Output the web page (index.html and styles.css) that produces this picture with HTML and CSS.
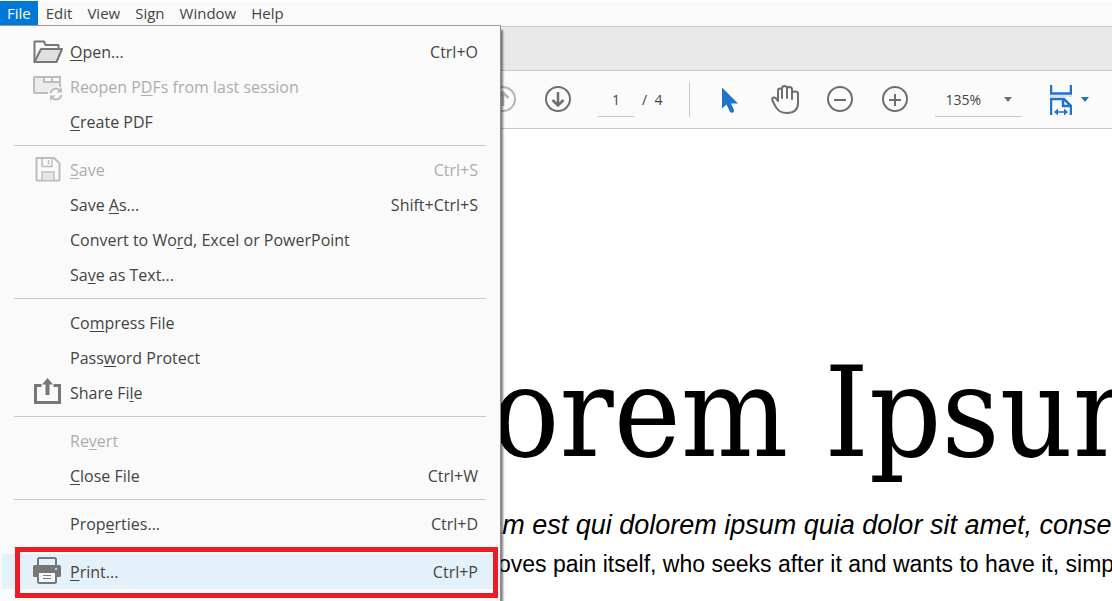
FILE: index.html
```html
<!DOCTYPE html>
<html lang="en">
<head>
    <meta charset="UTF-8">
    <meta name="viewport" content="width=device-width, initial-scale=1.0">
    <title>Lorem Ipsum</title>
    <link rel="stylesheet" href="styles.css">
</head>
<body>
    <nav class="menubar">
        <button class="menubar-item active">File</button>
        <button class="menubar-item">Edit</button>
        <button class="menubar-item">View</button>
        <button class="menubar-item">Sign</button>
        <button class="menubar-item">Window</button>
        <button class="menubar-item">Help</button>
    </nav>

    <!-- File menu -->
    <ul class="menu">
        <li><button class="menu-item">
            <svg class="menu-icon" viewBox="0 0 30 29" fill="none" stroke="#777" stroke-width="2" stroke-linejoin="round">
                <path d="M1.500 25V4.500H11L12.500 8H25.500V12"/>
                <path d="M1.500 25L8 12H29L23.500 25Z" fill="#e0e0e0"/>
            </svg>
            <span><u>O</u>pen...</span><kbd>Ctrl+O</kbd>
        </button></li>
        <li><button class="menu-item" disabled>
            <svg class="menu-icon" viewBox="0 0 30 29" fill="none" stroke="#bdbdbd" stroke-width="2">
                <rect x="1" y="5" width="26" height="16" rx="1" fill="#ececec"/>
                <path d="M11 5V10H27V5ZM19 5V10" fill="#fafafa"/>
                <circle cx="23" cy="22" r="8" fill="#fafafa" stroke="none"/>
                <path d="M17.500 21A5.500 5.500 0 0 1 27 18.500M28.500 23A5.500 5.500 0 0 1 19 25.500"/>
                <path d="M29 15V20.500H23.500ZM17 29V23.500H22.500Z" fill="#bdbdbd" stroke="none"/>
            </svg>
            <span>Reopen P<u>D</u>Fs from last session</span>
        </button></li>
        <li><button class="menu-item"><span class="menu-icon"></span><span><u>C</u>reate PDF</span></button></li>
        <li class="separator"></li>
        <li><button class="menu-item" disabled>
            <svg class="menu-icon" viewBox="0 0 30 29" fill="none" stroke="#bdbdbd" stroke-width="2" stroke-linejoin="round">
                <path d="M3.500 3H21L26.500 8.500V25.500H3.500Z"/>
                <path d="M9 3V11.500H19V3M9 25V17H21V25" stroke-width="1.500"/>
                <path d="M10 18H20V25H10Z" fill="#e6e6e6" stroke="none"/>
                <path d="M15.500 5V9.500" stroke-width="1.500"/>
            </svg>
            <span><u>S</u>ave</span><kbd>Ctrl+S</kbd>
        </button></li>
        <li><button class="menu-item"><span class="menu-icon"></span><span>Save <u>A</u>s...</span><kbd>Shift+Ctrl+S</kbd></button></li>
        <li><button class="menu-item"><span class="menu-icon"></span><span>Convert to Wo<u>r</u>d, Excel or PowerPoint</span></button></li>
        <li><button class="menu-item"><span class="menu-icon"></span><span>Sa<u>v</u>e as Text...</span></button></li>
        <li class="separator"></li>
        <li><button class="menu-item"><span class="menu-icon"></span><span>Co<u>m</u>press File</span></button></li>
        <li><button class="menu-item"><span class="menu-icon"></span><span>Pass<u>w</u>ord Protect</span></button></li>
        <li><button class="menu-item">
            <svg class="menu-icon" viewBox="0 0 30 29" fill="none" stroke="#777" stroke-width="3">
                <path d="M8.500 7.500H2.500V24.500H26.500V7.500H20.500"/>
                <path d="M14.500 17V4" stroke-width="4"/>
                <path d="M14.500 0L20 6.500H9Z" fill="#777" stroke="none"/>
            </svg>
            <span>Share Fi<u>l</u>e</span>
        </button></li>
        <li class="separator"></li>
        <li><button class="menu-item" disabled><span class="menu-icon"></span><span>Re<u>v</u>ert</span></button></li>
        <li><button class="menu-item"><span class="menu-icon"></span><span><u>C</u>lose File</span><kbd>Ctrl+W</kbd></button></li>
        <li class="separator"></li>
        <li><button class="menu-item"><span class="menu-icon"></span><span>Prop<u>e</u>rties...</span><kbd>Ctrl+D</kbd></button></li>
        <li class="separator"></li>
        <li class="highlighted"><button class="menu-item">
            <svg class="menu-icon" viewBox="0 0 30 29" fill="none" stroke="#777" stroke-width="2">
                <path d="M5 9V2.500Q5 1 6.500 1H21.500Q23 1 23 2.500V9"/>
                <path d="M2 8H26Q28 8 28 10V18.500Q28 20 26.500 20H1.500Q0 20 0 18.500V10Q0 8 2 8Z" fill="#777" stroke="none"/>
                <path d="M5 15H23V24.500Q23 26 21.500 26H6.500Q5 26 5 24.500Z" fill="#f2f7fb"/>
                <path d="M10 18.500H18M10 21.500H18" stroke-width="1"/>
                <circle cx="23" cy="12" r="1" fill="#e5f1fa" stroke="none"/>
            </svg>
            <span><u>P</u>rint...</span><kbd>Ctrl+P</kbd>
        </button></li>
        <li class="separator"></li>
    </ul>

    <div class="tabs"></div>

    <div class="toolbar">
        <div class="tools">
            <button class="tool" aria-label="Previous page" disabled>
                <svg width="28" height="28" viewBox="0 0 28 28" fill="none" stroke="#b5b5b5" stroke-width="2">
                    <circle cx="14" cy="13" r="12"/>
                    <path d="M14 20V7M8.500 12L14 6.500L19.500 12" stroke-width="2.500"/>
                </svg>
            </button>
            <button class="tool" aria-label="Next page">
                <svg width="28" height="28" viewBox="0 0 28 28" fill="none" stroke="#6e6e6e" stroke-width="2">
                    <circle cx="14" cy="13" r="12"/>
                    <path d="M14 6V19M8.500 14L14 19.500L19.500 14" stroke-width="2.500"/>
                </svg>
            </button>
        </div>
        <div class="pages">
            <input class="page-number" type="text" value="1" aria-label="Page number">
            <span>/&nbsp; 4</span>
        </div>
        <div class="tools group">
            <button class="tool" aria-label="Select">
                <svg width="28" height="28" viewBox="0 0 28 28" fill="#1f73c8">
                    <path d="M6 1.500V22.500L10.500 18.500L14 26Q15 27 17 26.500Q18.500 25.500 18 24L15 17.500H22Z"/>
                </svg>
            </button>
            <button class="tool" aria-label="Hand">
                <svg width="28" height="29" viewBox="0 0 28 29" fill="none" stroke="#6e6e6e" stroke-width="2" stroke-linejoin="round" stroke-linecap="round">
                    <path d="M7 16V5.500Q7 3.500 9 3.500Q11 3.500 11 5.500V13V3.500Q11 1 13.500 1Q16 1 16 3.500V13V4Q16 2 18.500 2Q21 2 21 4.500V14V8.500Q21 6.500 24 6.500Q27 6.500 27 8.500V18Q27 28 15.500 28Q9 28 5.500 23Q3 19 1.500 15.500Q0.500 13 2.500 12.500Q5 12 7 16"/>
                </svg>
            </button>
            <button class="tool" aria-label="Zoom out">
                <svg width="28" height="28" viewBox="0 0 28 28" fill="none" stroke="#6e6e6e" stroke-width="2">
                    <circle cx="14" cy="13" r="12"/>
                    <path d="M8 14H20"/>
                </svg>
            </button>
            <button class="tool" aria-label="Zoom in">
                <svg width="28" height="28" viewBox="0 0 28 28" fill="none" stroke="#6e6e6e" stroke-width="2">
                    <circle cx="14" cy="13" r="12"/>
                    <path d="M8 14H20M14 8V20"/>
                </svg>
            </button>
        </div>
        <div class="zoom">
            <select class="zoom-level" aria-label="Zoom level">
                <option>135%</option>
            </select>
            <svg class="zoom-caret" width="8" height="5" viewBox="0 0 8 5"><path d="M0 0H8L4 5Z" fill="#6e6e6e"/></svg>
        </div>
        <button class="tool fit" aria-label="Page display">
            <svg width="22" height="32" viewBox="0 0 22 32" fill="none" stroke="#1f73c8" stroke-width="2">
                <path d="M1 1V9.500H21V1" stroke-width="2.500"/>
                <path d="M0 12H22" stroke="#d6e4f5"/>
                <path d="M1 31V15H14L21 22V31M13 15V22H21" stroke-width="2.500"/>
                <path d="M5 28H17" stroke-width="1.500"/>
                <path d="M8 24.500V31.500L4 28ZM14 24.500V31.500L18 28Z" fill="#1f73c8" stroke="none"/>
            </svg>
            <svg width="8" height="5" viewBox="0 0 8 5"><path d="M0 0H8L4 5Z" fill="#1f73c8"/></svg>
        </button>
    </div>

    <main class="document">
        <h1>Lorem Ipsum</h1>
        <p class="quote">Neque porro quisquam est qui dolorem ipsum quia dolor sit amet, consectetur</p>
        <p class="translation">There is no one who loves pain itself, who seeks after it and wants to have it, simply</p>
    </main>
</body>
</html>
```
FILE: styles.css
```css
* {
    margin: 0;
    padding: 0;
    box-sizing: border-box;
}

body {
    font-family: "Open Sans", "Noto Sans", sans-serif;
    background-color: #fff;
    color: #444;
    height: 100vh;
    position: relative;
    overflow: hidden;
}

button,
input,
select {
    font: inherit;
    color: inherit;
    background: none;
    border: none;
}

/* Menu bar */
.menubar {
    display: flex;
    gap: 1px;
    height: 26px;
    padding-bottom: 1px;
    background-color: #fafafa;
    border-top: 1px solid #fff;
    font-size: 15px;
}

.menubar-item {
    padding: 0 7px;
    line-height: 24px;
}

.menubar-item.active {
    background-color: #0078d7;
    color: #fff;
}

/* Drop-down menu, lies over the document */
.menu {
    position: absolute;
    z-index: 1;
    top: 25px;
    left: 0;
    width: 501px;
    padding-top: 8px;
    list-style: none;
    background-color: #fafafa;
    border-top: 1px solid #999;
    border-right: 1px solid #8c8c8c;
    box-shadow: 2px 5px 2px rgba(0, 0, 0, 0.5);
    font-size: 16px;
}

.menu-item {
    display: flex;
    align-items: center;
    gap: 7px;
    width: 100%;
    height: 35px;
    padding: 0 22px 0 33px;
    text-align: left;
}

.menu-item:disabled {
    color: #adadad;
}

.menu-icon {
    width: 30px;
    height: 29px;
}

.menu-item u {
    text-underline-offset: 2px;
    text-decoration-thickness: 1px;
}

.menu-item kbd {
    margin-left: auto;
    font-family: inherit;
}

.separator {
    height: 13px;
    padding: 6px 14px;
}

.separator::before {
    content: "";
    display: block;
    height: 1px;
    background-color: #c8c8c8;
}

.highlighted {
    position: relative;
    margin-left: 2px;
    background-color: #e5f1fa;
}

.highlighted .menu-item {
    padding-left: 31px;
}

/* Red frame round the highlighted item */
.highlighted::after {
    content: "";
    position: absolute;
    inset: -7px 2px -9px 13px;
    border: 5px solid #ed1c24;
    pointer-events: none;
}

/* Tabs and toolbar */
.tabs {
    height: 45px;
    background-color: #e9e9e9;
    border-top: 1px solid #c8c8c8;
    border-bottom: 1px solid #c8c8c8;
}

.toolbar {
    display: flex;
    align-items: center;
    height: 58px;
    padding-left: 489px;
    background-color: #fbfbfb;
    border-bottom: 1px solid #c8c8c8;
    font-size: 14px;
}

.tools {
    display: flex;
    align-items: center;
    gap: 27px;
}

.tool {
    display: flex;
    align-items: center;
    flex-shrink: 0;
}

.pages {
    display: flex;
    align-items: center;
    gap: 8px;
    margin-left: 26px;
}

.page-number {
    width: 36px;
    height: 35px;
    border-bottom: 1px solid #c8c8c8;
    text-align: center;
}

.group {
    height: 35px;
    margin-left: 27px;
    padding-left: 26px;
    border-left: 1px solid #c8c8c8;
}

.zoom {
    display: flex;
    align-items: center;
    position: relative;
    margin-left: 26px;
}

.zoom-level {
    width: 87px;
    height: 35px;
    padding-left: 10px;
    border-bottom: 1px solid #c8c8c8;
    appearance: none;
}

.zoom-caret {
    position: absolute;
    right: 10px;
    pointer-events: none;
}

.fit {
    gap: 9px;
    margin-left: 28px;
}

/* Document */
.document {
    padding-top: 204px;
    color: #000;
    font-family: "Liberation Sans", Arial, sans-serif;
    white-space: nowrap;
    overflow: hidden;
}

.document h1 {
    padding-left: 416px;
    font-family: "DejaVu Serif Condensed", "DejaVu Serif", serif;
    font-size: 126px;
    font-weight: normal;
    line-height: 160px;
}

.quote {
    padding-left: 250px;
    font-size: 27px;
    font-style: italic;
    line-height: 40px;
    margin-top: 12px;
}

.translation {
    padding-left: 278px;
    font-size: 23px;
    line-height: 38px;
}
```
